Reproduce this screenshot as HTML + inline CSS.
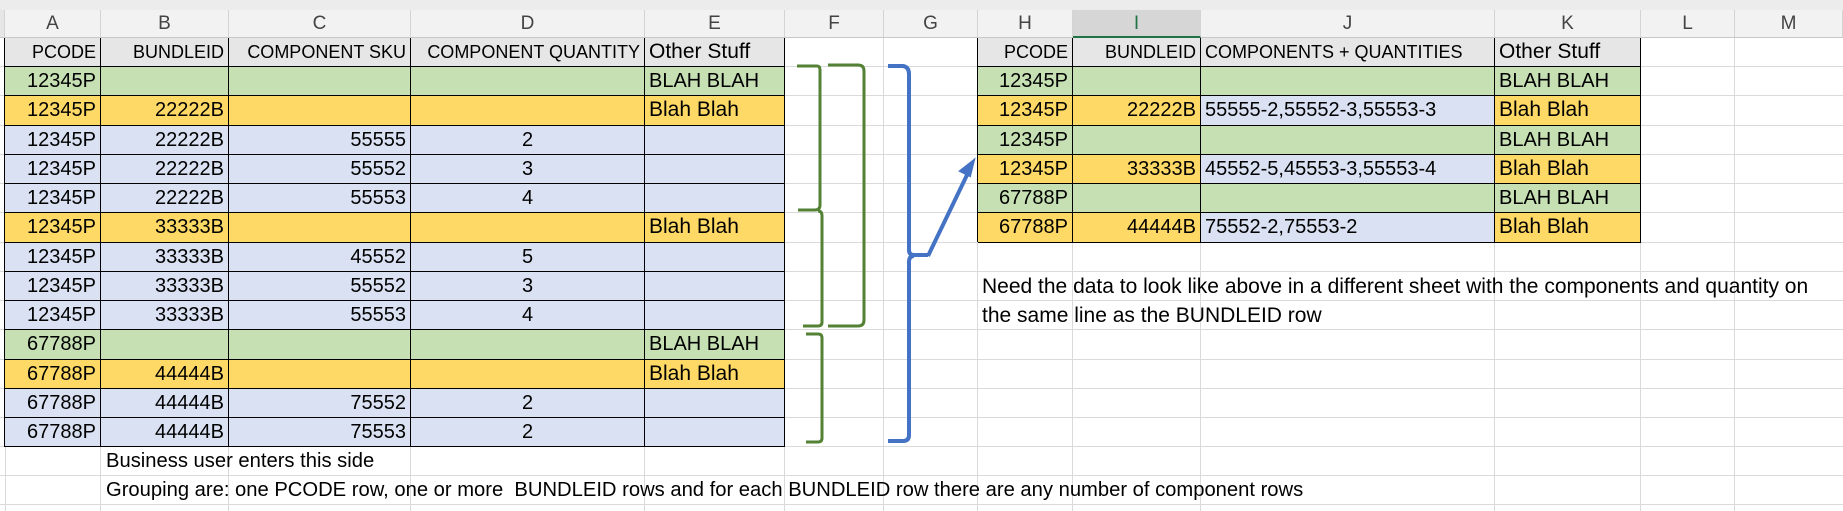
<!DOCTYPE html>
<html><head><meta charset="utf-8"><style>
*{margin:0;padding:0;box-sizing:border-box}
body{width:1843px;height:511px;position:relative;overflow:hidden;background:#fff;font-family:"Liberation Sans",sans-serif;font-size:20px;color:#000}
.top{position:absolute;left:0;top:0;width:1843px;height:10px;background:#ececec}
.ch{position:absolute;top:10px;height:28px;background:#f2f2f2;border-right:1px solid #d4d4d4;border-bottom:1px solid #c8c8c8;text-align:center;line-height:28px;color:#444;font-size:19px}
.vl{position:absolute;top:38px;width:1px;height:473px;background:#dadada}
.hl{position:absolute;left:0;width:1843px;height:1px;background:#dadada}
.r{position:absolute;height:29px}
.c{position:absolute;top:0;height:100%;border-right:1px solid #000;border-bottom:1px solid #000;line-height:28px;padding:0 4px;white-space:nowrap;overflow:hidden}
.R{text-align:right}.C{text-align:center}
.g{background:#c6e0b4}.y{background:#ffd966}.b{background:#d9e1f2}.h{background:#e7e6e6;font-size:18px}
.L{font-size:21px}
.t{position:absolute;white-space:nowrap;line-height:29px;font-size:20.2px}
</style></head><body>
<div class="top"></div>
<div class="ch" style="left:0;width:5px;background:#e6e6e6"></div>
<div class="ch" style="left:5px;width:96px">A</div>
<div class="ch" style="left:101px;width:128px">B</div>
<div class="ch" style="left:229px;width:182px">C</div>
<div class="ch" style="left:411px;width:234px">D</div>
<div class="ch" style="left:645px;width:140px">E</div>
<div class="ch" style="left:785px;width:99px">F</div>
<div class="ch" style="left:884px;width:94px">G</div>
<div class="ch" style="left:978px;width:95px">H</div>
<div class="ch" style="left:1073px;width:128px;background:#d6d6d6;border-bottom:2px solid #217346;color:#217346">I</div>
<div class="ch" style="left:1201px;width:294px">J</div>
<div class="ch" style="left:1495px;width:146px">K</div>
<div class="ch" style="left:1641px;width:94px">L</div>
<div class="ch" style="left:1735px;width:108px">M</div>

<div class="vl" style="left:5px"></div><div class="vl" style="left:100px"></div><div class="vl" style="left:228px"></div><div class="vl" style="left:410px"></div><div class="vl" style="left:644px"></div><div class="vl" style="left:784px"></div><div class="vl" style="left:883px"></div><div class="vl" style="left:977px"></div><div class="vl" style="left:1072px"></div><div class="vl" style="left:1200px"></div><div class="vl" style="left:1494px"></div><div class="vl" style="left:1640px"></div><div class="vl" style="left:1734px"></div>
<div class="hl" style="top:66px"></div><div class="hl" style="top:95px"></div><div class="hl" style="top:125px"></div><div class="hl" style="top:154px"></div><div class="hl" style="top:183px"></div><div class="hl" style="top:212px"></div><div class="hl" style="top:242px"></div><div class="hl" style="top:271px"></div><div class="hl" style="top:300px"></div><div class="hl" style="top:329px"></div><div class="hl" style="top:359px"></div><div class="hl" style="top:388px"></div><div class="hl" style="top:417px"></div><div class="hl" style="top:446px"></div><div class="hl" style="top:475px"></div><div class="hl" style="top:504px"></div>

<div style="position:absolute;left:5px;top:38px;width:780px;height:1px;background:#000"></div>
<div class="r" style="top:38px;left:0;width:800px"><div class="c h R" style="left:5px;width:96px">PCODE</div><div class="c h R" style="left:101px;width:128px">BUNDLEID</div><div class="c h R" style="left:229px;width:182px">COMPONENT SKU</div><div class="c h R" style="left:411px;width:234px">COMPONENT QUANTITY</div><div class="c h L" style="left:645px;width:140px;font-size:21px">Other Stuff</div></div>
<div class="r" style="top:67px;left:0;width:800px"><div class="c g R" style="left:5px;width:96px">12345P</div><div class="c g R" style="left:101px;width:128px"></div><div class="c g R" style="left:229px;width:182px"></div><div class="c g C" style="left:411px;width:234px"></div><div class="c g" style="left:645px;width:140px">BLAH BLAH</div></div>
<div class="r" style="top:96px;left:0;width:800px;height:30px"><div class="c y R" style="left:5px;width:96px">12345P</div><div class="c y R" style="left:101px;width:128px">22222B</div><div class="c y R" style="left:229px;width:182px"></div><div class="c y C" style="left:411px;width:234px"></div><div class="c y L" style="left:645px;width:140px">Blah Blah</div></div>
<div class="r" style="top:126px;left:0;width:800px"><div class="c b R" style="left:5px;width:96px">12345P</div><div class="c b R" style="left:101px;width:128px">22222B</div><div class="c b R" style="left:229px;width:182px">55555</div><div class="c b C" style="left:411px;width:234px">2</div><div class="c b" style="left:645px;width:140px"></div></div>
<div class="r" style="top:155px;left:0;width:800px"><div class="c b R" style="left:5px;width:96px">12345P</div><div class="c b R" style="left:101px;width:128px">22222B</div><div class="c b R" style="left:229px;width:182px">55552</div><div class="c b C" style="left:411px;width:234px">3</div><div class="c b" style="left:645px;width:140px"></div></div>
<div class="r" style="top:184px;left:0;width:800px"><div class="c b R" style="left:5px;width:96px">12345P</div><div class="c b R" style="left:101px;width:128px">22222B</div><div class="c b R" style="left:229px;width:182px">55553</div><div class="c b C" style="left:411px;width:234px">4</div><div class="c b" style="left:645px;width:140px"></div></div>
<div class="r" style="top:213px;left:0;width:800px;height:30px"><div class="c y R" style="left:5px;width:96px">12345P</div><div class="c y R" style="left:101px;width:128px">33333B</div><div class="c y R" style="left:229px;width:182px"></div><div class="c y C" style="left:411px;width:234px"></div><div class="c y L" style="left:645px;width:140px">Blah Blah</div></div>
<div class="r" style="top:243px;left:0;width:800px"><div class="c b R" style="left:5px;width:96px">12345P</div><div class="c b R" style="left:101px;width:128px">33333B</div><div class="c b R" style="left:229px;width:182px">45552</div><div class="c b C" style="left:411px;width:234px">5</div><div class="c b" style="left:645px;width:140px"></div></div>
<div class="r" style="top:272px;left:0;width:800px"><div class="c b R" style="left:5px;width:96px">12345P</div><div class="c b R" style="left:101px;width:128px">33333B</div><div class="c b R" style="left:229px;width:182px">55552</div><div class="c b C" style="left:411px;width:234px">3</div><div class="c b" style="left:645px;width:140px"></div></div>
<div class="r" style="top:301px;left:0;width:800px"><div class="c b R" style="left:5px;width:96px">12345P</div><div class="c b R" style="left:101px;width:128px">33333B</div><div class="c b R" style="left:229px;width:182px">55553</div><div class="c b C" style="left:411px;width:234px">4</div><div class="c b" style="left:645px;width:140px"></div></div>
<div class="r" style="top:330px;left:0;width:800px;height:30px"><div class="c g R" style="left:5px;width:96px">67788P</div><div class="c g R" style="left:101px;width:128px"></div><div class="c g R" style="left:229px;width:182px"></div><div class="c g C" style="left:411px;width:234px"></div><div class="c g" style="left:645px;width:140px">BLAH BLAH</div></div>
<div class="r" style="top:360px;left:0;width:800px"><div class="c y R" style="left:5px;width:96px">67788P</div><div class="c y R" style="left:101px;width:128px">44444B</div><div class="c y R" style="left:229px;width:182px"></div><div class="c y C" style="left:411px;width:234px"></div><div class="c y L" style="left:645px;width:140px">Blah Blah</div></div>
<div class="r" style="top:389px;left:0;width:800px"><div class="c b R" style="left:5px;width:96px">67788P</div><div class="c b R" style="left:101px;width:128px">44444B</div><div class="c b R" style="left:229px;width:182px">75552</div><div class="c b C" style="left:411px;width:234px">2</div><div class="c b" style="left:645px;width:140px"></div></div>
<div class="r" style="top:418px;left:0;width:800px"><div class="c b R" style="left:5px;width:96px">67788P</div><div class="c b R" style="left:101px;width:128px">44444B</div><div class="c b R" style="left:229px;width:182px">75553</div><div class="c b C" style="left:411px;width:234px">2</div><div class="c b" style="left:645px;width:140px"></div></div>
<div style="position:absolute;left:4px;top:38px;width:1px;height:409px;background:#000"></div>

<div class="t" style="left:106px;top:447px">Business user enters this side</div>
<div class="t" style="left:106px;top:476px">Grouping are: one PCODE row, one or more&nbsp; BUNDLEID rows and for each BUNDLEID row there are any number of component rows</div>

<div style="position:absolute;left:977px;top:38px;width:664px;height:1px;background:#000"></div>
<div style="position:absolute;left:977px;top:38px;width:1px;height:204px;background:#000"></div>
<div class="r" style="top:38px;left:0;width:1700px"><div class="c h R" style="left:978px;width:95px">PCODE</div><div class="c h R" style="left:1073px;width:128px">BUNDLEID</div><div class="c h" style="left:1201px;width:294px">COMPONENTS + QUANTITIES</div><div class="c h L" style="left:1495px;width:146px;font-size:21px">Other Stuff</div></div>
<div class="r" style="top:67px;left:0;width:1700px"><div class="c g R" style="left:978px;width:95px">12345P</div><div class="c g R" style="left:1073px;width:128px"></div><div class="c g" style="left:1201px;width:294px"></div><div class="c g" style="left:1495px;width:146px">BLAH BLAH</div></div>
<div class="r" style="top:96px;left:0;width:1700px;height:30px"><div class="c y R" style="left:978px;width:95px">12345P</div><div class="c y R" style="left:1073px;width:128px">22222B</div><div class="c b" style="left:1201px;width:294px">55555-2,55552-3,55553-3</div><div class="c y L" style="left:1495px;width:146px">Blah Blah</div></div>
<div class="r" style="top:126px;left:0;width:1700px"><div class="c g R" style="left:978px;width:95px">12345P</div><div class="c g R" style="left:1073px;width:128px"></div><div class="c g" style="left:1201px;width:294px"></div><div class="c g" style="left:1495px;width:146px">BLAH BLAH</div></div>
<div class="r" style="top:155px;left:0;width:1700px"><div class="c y R" style="left:978px;width:95px">12345P</div><div class="c y R" style="left:1073px;width:128px">33333B</div><div class="c b" style="left:1201px;width:294px">45552-5,45553-3,55553-4</div><div class="c y L" style="left:1495px;width:146px">Blah Blah</div></div>
<div class="r" style="top:184px;left:0;width:1700px"><div class="c g R" style="left:978px;width:95px">67788P</div><div class="c g R" style="left:1073px;width:128px"></div><div class="c g" style="left:1201px;width:294px"></div><div class="c g" style="left:1495px;width:146px">BLAH BLAH</div></div>
<div class="r" style="top:213px;left:0;width:1700px;height:30px"><div class="c y R" style="left:978px;width:95px">67788P</div><div class="c y R" style="left:1073px;width:128px">44444B</div><div class="c b" style="left:1201px;width:294px">75552-2,75553-2</div><div class="c y L" style="left:1495px;width:146px">Blah Blah</div></div>

<div class="t" style="left:982px;top:272px;font-size:21px">Need the data to look like above in a different sheet with the components and quantity on</div>
<div class="t" style="left:982px;top:301px;font-size:21px">the same line as the BUNDLEID row</div>

<svg style="position:absolute;left:0;top:0" width="1843" height="511" viewBox="0 0 1843 511">
<g fill="none" stroke="#548235" stroke-width="3" stroke-linejoin="round">
<path d="M797 66 H817 Q820 66 820 70 V205 Q820 210 815 210 H798"/>
<path d="M818 211 Q822 211 822 216 V322 Q822 326 818 326 H803"/>
<path d="M828 65 H858 Q864 65 864 71 V320 Q864 326 858 326 H828"/>
<path d="M806 334 H818 Q822 334 822 338 V438 Q822 442 818 442 H806"/>
</g>
<g fill="none" stroke="#4472c4" stroke-width="4" stroke-linejoin="round">
<path d="M888 66 H903 Q909 67 909 74 V250 Q909 255 914 255 H928"/>
<path d="M914 256 Q909 256 909 262 V435 Q909 441 903 441 H888"/>
<path d="M928 256 L967 175"/>
</g>
<path d="M974 160 L960 171 L970 176 Z" fill="#4472c4" stroke="#4472c4" stroke-width="2"/>
</svg>
</body></html>
